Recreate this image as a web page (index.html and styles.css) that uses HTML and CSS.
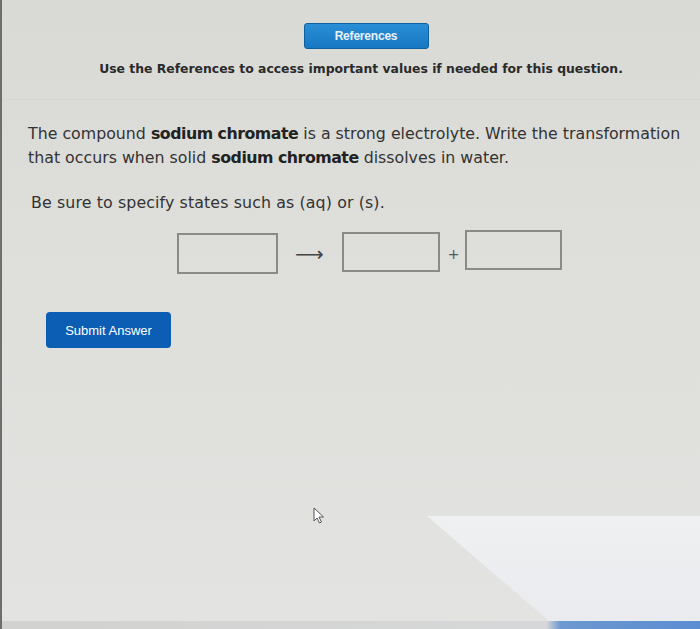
FILE: index.html
```html
<!DOCTYPE html>
<html lang="en">
<head>
  <meta charset="UTF-8">
  <title>Question</title>
  <link rel="stylesheet" href="styles.css">
</head>
<body>
  <div class="screen">
    <div class="header">
      <button class="btn-ref">References</button>
      <p class="notice">Use the References to access important values if needed for this question.</p>
    </div>

    <div class="question">
      <p class="prompt">The compound <b>sodium chromate</b> is a strong electrolyte. Write the transformation that occurs when solid <b>sodium chromate</b> dissolves in water.</p>
      <p class="hint">Be sure to specify states such as (aq) or (s).</p>

      <div class="equation">
        <input type="text" class="slot slot-1">
        <span class="arrow">&#10230;</span>
        <input type="text" class="slot slot-2">
        <span class="plus">+</span>
        <input type="text" class="slot slot-3">
      </div>

      <button class="btn-submit">Submit Answer</button>
    </div>

    <svg class="cursor" width="14" height="18" viewBox="0 0 14 18">
      <path d="M1 1 L1 14 L4 11 L6.5 16 L8.5 15 L6 10 L10.5 10 Z" fill="#fff" stroke="#555" stroke-width="1"/>
    </svg>
    <div class="glare"></div>
    <div class="bezel"></div>
  </div>
</body>
</html>
```

FILE: styles.css
```css
html, body {
  margin: 0;
  height: 100%;
}
body {
  font-family: "DejaVu Sans", Verdana, sans-serif;
  color: #2e2e2e;
  background: #dcdcd9;
  overflow: hidden;
}
.screen {
  position: relative;
  height: 629px;
  border-left: 2px solid #6e6e6c;
  box-sizing: border-box;
  background: linear-gradient(180deg, #d9d9d5 0%, #dededb 40%, #e3e3e1 100%);
}
.header {
  display: flex;
  flex-direction: column;
  align-items: center;
  padding-top: 23px;
  height: 76px;
  border-bottom: 1px solid #d6d6d2;
}
.btn-ref {
  width: 125px;
  height: 26px;
  margin-left: 30px;
  border: 1px solid #0d5f9e;
  border-radius: 3px;
  background: linear-gradient(180deg, #2a8fd6 0%, #1677c2 100%);
  color: #e8f2fb;
  font-family: "Liberation Sans", Arial, sans-serif;
  font-size: 12px;
  font-weight: bold;
  letter-spacing: -0.2px;
}
.notice {
  margin: 12px 0 0 20px;
  font-size: 12.4px;
  font-weight: bold;
  color: #2a2a2a;
}
.question {
  padding: 22px 10px 0 26px;
}
.prompt {
  margin: 0;
  font-size: 15.8px;
  line-height: 24px;
  color: #333;
}
.prompt b {
  color: #222;
  letter-spacing: -0.5px;
}
.hint {
  margin: 21px 0 0 3px;
  font-size: 15.8px;
  line-height: 24px;
  letter-spacing: 0.12px;
  color: #333;
}
.equation {
  display: flex;
  align-items: center;
  margin: 18px 0 0 149px;
}
.slot {
  width: 101px;
  height: 41px;
  box-sizing: border-box;
  border: 2px solid #8a8a88;
  background: transparent;
}
.slot-2, .slot-3 {
  width: 97px;
  height: 40px;
  margin-top: -4px;
}
.slot-2 {
  width: 98px;
}
.slot-3 {
  margin-top: -8px;
}
.arrow {
  margin: 0 18px 0 17px;
  font-size: 20px;
  color: #444;
}
.plus {
  margin: 0 6px 0 8px;
  font-size: 14px;
  color: #555;
}
.btn-submit {
  display: block;
  margin: 38px 0 0 18px;
  width: 125px;
  height: 36px;
  border: none;
  border-radius: 4px;
  background: #0b5eb4;
  color: #fff;
  font-family: "Liberation Sans", Arial, sans-serif;
  font-size: 13px;
}
.cursor {
  position: absolute;
  left: 311px;
  top: 507px;
}
.glare {
  position: absolute;
  left: 425px;
  right: 0;
  top: 516px;
  bottom: 8px;
  background: linear-gradient(180deg, #eef0f2 0%, #e9ebee 100%);
  clip-path: polygon(0 0, 100% 0, 100% 100%, 122px 100%);
}
.bezel {
  position: absolute;
  left: 0;
  right: 0;
  bottom: 0;
  height: 8px;
  background: linear-gradient(90deg, #d2d2d0 0%, #d6d7d8 78%, #6d98d0 80%, #5b8dd2 100%);
}
```
